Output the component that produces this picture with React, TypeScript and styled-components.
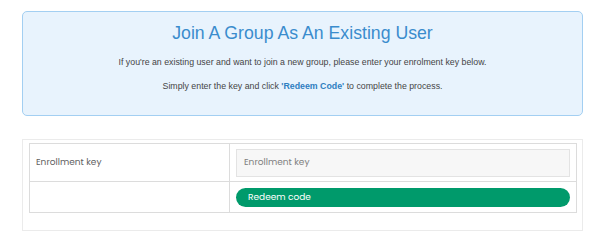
import React from "react"
import styled, { createGlobalStyle } from "styled-components"

const GlobalStyle = createGlobalStyle`
  html, body {
    margin: 0;
    padding: 0;
    background: #ffffff;
  }
  body {
    font-family: "Liberation Sans", Arial, sans-serif;
  }
`

const Page = styled.div`
  width: 600px;
  padding: 11px 17px 0 22px;
  box-sizing: border-box;
  display: flex;
  flex-direction: column;
  gap: 23px;
`

const InfoBox = styled.section`
  height: 105px;
  box-sizing: border-box;
  background: #e8f3fd;
  border: 1px solid #a3cff2;
  border-radius: 5px;
  display: flex;
  flex-direction: column;
  align-items: center;
  padding-top: 10px;
`

const Title = styled.h2`
  margin: 0;
  font-family: "Liberation Sans", Arial, sans-serif;
  font-weight: 400;
  font-size: 17.7px;
  line-height: 22px;
  color: #3a8ccd;
`

const Text = styled.p<{ $top: number }>`
  margin: ${(p) => p.$top}px 0 0;
  font-family: "Liberation Sans", Arial, sans-serif;
  font-size: 8.8px;
  line-height: 12px;
  color: #454545;

  b {
    color: #2f7fc1;
  }
`

const Card = styled.section`
  height: 92px;
  box-sizing: border-box;
  border: 1px solid #ebebeb;
  padding: 3px 5px 0 6px;
`

const Table = styled.div`
  display: grid;
  grid-template-columns: 200px 1fr;
  grid-template-rows: 38px 31px;
  border: 1px solid #dcdcdc;
  border-right: 0;
  border-bottom: 0;
  font-family: Poppins, Inter, "Noto Sans", sans-serif;
`

const Cell = styled.div`
  border-right: 1px solid #dcdcdc;
  border-bottom: 1px solid #dcdcdc;
  display: flex;
  align-items: center;
  padding: 0 6px;
  font-size: 9px;
  color: #5f5f5f;
`

const KeyInput = styled.input`
  width: 100%;
  height: 28px;
  box-sizing: border-box;
  border: 1px solid #e3e3e3;
  background: #f7f7f7;
  padding: 0 7px;
  font-family: inherit;
  font-size: 9px;
  color: #555;
  outline: none;

  &::placeholder {
    color: #808080;
  }
`

const RedeemButton = styled.button`
  width: 100%;
  height: 19px;
  border: 0;
  border-radius: 10px;
  background: #009a6b;
  color: #ffffff;
  font-family: inherit;
  font-size: 9px;
  text-align: left;
  padding: 0 12px;
  cursor: pointer;
`

export default function App() {
  return (
    <>
      <GlobalStyle />
      <Page>
        <InfoBox>
          <Title>Join A Group As An Existing User</Title>
          <Text $top={12}>
            If you're an existing user and want to join a new group, please enter your enrolment key below.
          </Text>
          <Text $top={12}>
            Simply enter the key and click <b>'Redeem Code'</b> to complete the process.
          </Text>
        </InfoBox>
        <Card>
          <Table>
            <Cell>Enrollment key</Cell>
            <Cell>
              <KeyInput placeholder="Enrollment key" />
            </Cell>
            <Cell />
            <Cell>
              <RedeemButton>Redeem code</RedeemButton>
            </Cell>
          </Table>
        </Card>
      </Page>
    </>
  )
}
